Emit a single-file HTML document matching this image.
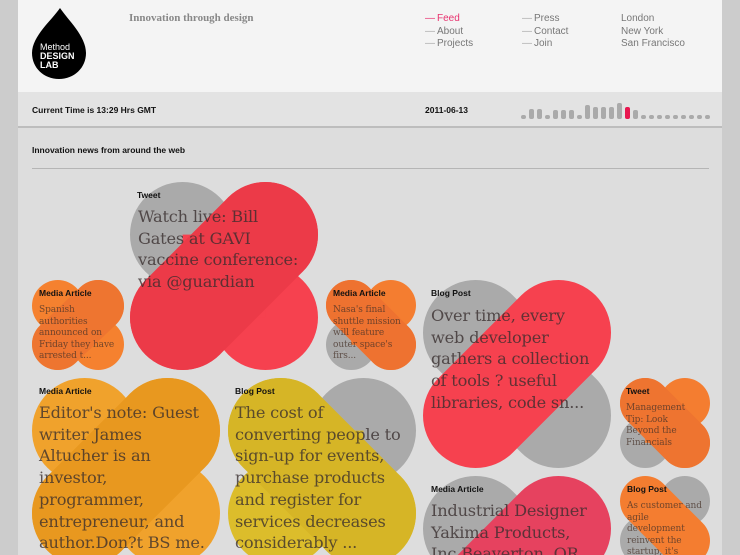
<!DOCTYPE html>
<html style="overflow:hidden;height:555px"><head><meta charset="utf-8"><style>
*{margin:0;padding:0;box-sizing:border-box}
body{width:740px;height:555px;overflow:hidden;background:#cccccc;position:relative;font-family:"Liberation Sans",sans-serif}
.main{position:absolute;left:18px;top:0;width:704px;height:555px;background:#dddddd}
.head{position:absolute;left:18px;top:0;width:704px;height:92px;background:#f4f4f4}
.bar{position:absolute;left:18px;top:92px;width:704px;height:36px;background:#e3e3e3;border-bottom:2px solid #bdbdbd}
.abs{position:absolute;white-space:nowrap}
.nav{font-size:10px;color:#777;line-height:12.5px}
.nav span{color:#aaa;letter-spacing:-1px;margin-right:3px}
.lab{position:absolute;font-size:8.5px;font-weight:bold;color:#111;white-space:nowrap}
.big{position:absolute;font-family:"DejaVu Serif","Liberation Serif",serif;font-size:16.2px;line-height:21.7px;color:rgba(55,45,45,.78);white-space:nowrap;letter-spacing:-.2px}
.sm{position:absolute;font-family:"DejaVu Serif","Liberation Serif",serif;font-size:9px;line-height:11.6px;color:rgba(70,50,40,.75);white-space:nowrap;letter-spacing:-.1px}
</style></head><body>
<div class="main"></div>
<div class="head"></div>
<svg class="abs" style="left:30px;top:6px" width="60" height="76" viewBox="0 0 60 76">
<path d="M30 2 C38 14 56 30 56 47 C56 62 44 73 29 73 C14 73 2 62 2 47 C2 30 22 14 30 2Z" fill="#000"/>
<text x="10" y="44" font-family="Liberation Sans" font-size="9" fill="#fff">Method</text>
<text x="10" y="53" font-family="Liberation Sans" font-size="9" font-weight="bold" fill="#fff">DESIGN</text>
<text x="10" y="62" font-family="Liberation Sans" font-size="9" font-weight="bold" fill="#fff">LAB</text>
</svg>
<div class="abs" style="left:129px;top:12px;font-family:'Liberation Serif',serif;font-weight:bold;font-size:11px;color:#888">Innovation through design</div>
<div class="abs nav" style="left:425px;top:13px"><div style="color:#e8326e"><span style="color:#e8326e">—</span>Feed</div><div><span>—</span>About</div><div><span>—</span>Projects</div></div>
<div class="abs nav" style="left:522px;top:13px"><div><span>—</span>Press</div><div><span>—</span>Contact</div><div><span>—</span>Join</div></div>
<div class="abs nav" style="left:621px;top:13px"><div>London</div><div>New York</div><div>San Francisco</div></div>
<div class="bar"></div>
<div class="abs" style="left:32px;top:105px;font-size:8.5px;font-weight:bold;color:#111">Current Time is 13:29 Hrs GMT</div>
<div class="abs" style="left:425px;top:105px;font-size:8.5px;font-weight:bold;color:#111">2011-06-13</div>
<svg class="abs" style="left:518px;top:98px" width="195" height="24">
<g fill="#aaa">
<rect x="3" y="17" width="5" height="4" rx="2"/><rect x="11" y="11" width="5" height="10" rx="2"/><rect x="19" y="11" width="5" height="10" rx="2"/><rect x="27" y="17" width="5" height="4" rx="2"/><rect x="35" y="12" width="5" height="9" rx="2"/><rect x="43" y="12" width="5" height="9" rx="2"/><rect x="51" y="12" width="5" height="9" rx="2"/><rect x="59" y="17" width="5" height="4" rx="2"/><rect x="67" y="7" width="5" height="14" rx="2"/><rect x="75" y="9" width="5" height="12" rx="2"/><rect x="83" y="9" width="5" height="12" rx="2"/><rect x="91" y="9" width="5" height="12" rx="2"/><rect x="99" y="5" width="5" height="16" rx="2"/><rect x="115" y="12" width="5" height="9" rx="2"/>
<rect x="123" y="17" width="5" height="4" rx="2"/><rect x="131" y="17" width="5" height="4" rx="2"/><rect x="139" y="17" width="5" height="4" rx="2"/><rect x="147" y="17" width="5" height="4" rx="2"/><rect x="155" y="17" width="5" height="4" rx="2"/><rect x="163" y="17" width="5" height="4" rx="2"/><rect x="171" y="17" width="5" height="4" rx="2"/><rect x="179" y="17" width="5" height="4" rx="2"/><rect x="187" y="17" width="5" height="4" rx="2"/>
</g><rect x="107" y="9" width="5" height="12" rx="2" fill="#e8174f"/></svg>
<div class="abs" style="left:32px;top:145px;font-size:8.5px;font-weight:bold;color:#111">Innovation news from around the web</div>
<div class="abs" style="left:32px;top:168px;width:677px;height:1px;background:#b5b5b5"></div>
<svg class="abs" style="left:0;top:0" width="740" height="555" stroke-linecap="round">
<!-- Tweet 130,182,188 r=52.6 ; TL gray -->
<circle cx="182.6" cy="234.6" r="52.6" fill="#aaa"/>
<g fill="#f6414f"><circle cx="265.4" cy="234.6" r="52.6"/><circle cx="265.4" cy="317.4" r="52.6"/><circle cx="182.6" cy="317.4" r="52.6"/><rect x="182.6" y="234.6" width="82.8" height="82.8"/></g>
<line x1="265.4" y1="234.6" x2="182.6" y2="317.4" stroke="#ec3a48" stroke-width="105.2"/>
<!-- Spanish 32,280,92 r=25.8 -->
<g fill="#f5812f"><circle cx="57.8" cy="305.8" r="25.8"/><circle cx="98.2" cy="305.8" r="25.8"/><circle cx="57.8" cy="344.2" r="25.8"/><circle cx="98.2" cy="344.2" r="25.8"/><rect x="57.8" y="305.8" width="40.4" height="38.4"/></g>
<line x1="98.2" y1="305.8" x2="57.8" y2="344.2" stroke="#ee7530" stroke-width="51.6"/>
<!-- Nasa 326,280,90 r=25.2 ; BL gray -->
<circle cx="351.2" cy="344.8" r="25.2" fill="#aaa"/>
<g fill="#f47d30"><circle cx="351.2" cy="305.2" r="25.2"/><circle cx="390.8" cy="305.2" r="25.2"/><circle cx="390.8" cy="344.8" r="25.2"/><rect x="351.2" y="305.2" width="39.6" height="39.6"/></g>
<line x1="351.2" y1="305.2" x2="390.8" y2="344.8" stroke="#ee7230" stroke-width="50.4"/>
<!-- Blog1 423,280,188 -->
<line x1="475.6" y1="332.6" x2="558.4" y2="415.4" stroke="#aaa" stroke-width="105.2"/>
<line x1="558.4" y1="332.6" x2="475.6" y2="415.4" stroke="#f6414f" stroke-width="105.2"/>
<!-- Tweet small 620,378,90 ; BL gray -->
<circle cx="645.2" cy="442.8" r="25.2" fill="#aaa"/>
<g fill="#f47d30"><circle cx="645.2" cy="403.2" r="25.2"/><circle cx="684.8" cy="403.2" r="25.2"/><circle cx="684.8" cy="442.8" r="25.2"/><rect x="645.2" y="403.2" width="39.6" height="39.6"/></g>
<line x1="645.2" y1="403.2" x2="684.8" y2="442.8" stroke="#ee7430" stroke-width="50.4"/>
<!-- Editor 32,378,188 -->
<g fill="#f0a22c"><circle cx="84.6" cy="430.6" r="52.6"/><circle cx="167.4" cy="430.6" r="52.6"/><circle cx="84.6" cy="513.4" r="52.6"/><circle cx="167.4" cy="513.4" r="52.6"/><rect x="84.6" y="430.6" width="82.8" height="82.8"/></g>
<line x1="167.4" y1="430.6" x2="84.6" y2="513.4" stroke="#e8981f" stroke-width="105.2"/>
<!-- Cost 228,378,188 ; TR gray -->
<circle cx="363.4" cy="430.6" r="52.6" fill="#aaa"/>
<g fill="#dcbd2b"><circle cx="280.6" cy="430.6" r="52.6"/><circle cx="280.6" cy="513.4" r="52.6"/><circle cx="363.4" cy="513.4" r="52.6"/><rect x="280.6" y="430.6" width="82.8" height="82.8"/></g>
<line x1="280.6" y1="430.6" x2="363.4" y2="513.4" stroke="#d6b526" stroke-width="105.2"/>
<!-- Industrial 423,476,188 -->
<line x1="475.6" y1="528.6" x2="558.4" y2="611.4" stroke="#aaa" stroke-width="105.2"/>
<line x1="558.4" y1="528.6" x2="475.6" y2="611.4" stroke="#e6425f" stroke-width="105.2"/>
<!-- Blog small 620,476,90 -->
<circle cx="684.8" cy="501.2" r="25.2" fill="#aaa"/>
<circle cx="645.2" cy="540.8" r="25.2" fill="#aaa"/>
<line x1="645.2" y1="501.2" x2="684.8" y2="540.8" stroke="#f47d30" stroke-width="50.4"/>
</svg>
<div class="abs" style="left:722px;top:0;width:18px;height:555px;background:#cccccc"></div>
<div class="lab" style="left:137px;top:190px">Tweet</div>
<div class="big" style="left:138px;top:206px">Watch live: Bill<br>Gates at GAVI<br>vaccine conference:<br>via @guardian</div>
<div class="lab" style="left:39px;top:288px">Media Article</div>
<div class="sm" style="left:39px;top:305px">Spanish<br>authorities<br>announced on<br>Friday they have<br>arrested t...</div>
<div class="lab" style="left:333px;top:288px">Media Article</div>
<div class="sm" style="left:333px;top:305px">Nasa's final<br>shuttle mission<br>will feature<br>outer space's<br>firs...</div>
<div class="lab" style="left:431px;top:288px">Blog Post</div>
<div class="big" style="left:431px;top:305px">Over time, every<br>web developer<br>gathers a collection<br>of tools ? useful<br>libraries, code sn...</div>
<div class="lab" style="left:626px;top:386px">Tweet</div>
<div class="sm" style="left:626px;top:403px">Management<br>Tip: Look<br>Beyond the<br>Financials</div>
<div class="lab" style="left:39px;top:386px">Media Article</div>
<div class="big" style="left:39px;top:402px">Editor's note: Guest<br>writer James<br>Altucher is an<br>investor,<br>programmer,<br>entrepreneur, and<br>author.Don?t BS me.</div>
<div class="lab" style="left:235px;top:386px">Blog Post</div>
<div class="big" style="left:235px;top:402px">The cost of<br>converting people to<br>sign-up for events,<br>purchase products<br>and register for<br>services decreases<br>considerably ...</div>
<div class="lab" style="left:431px;top:484px">Media Article</div>
<div class="big" style="left:431px;top:500px">Industrial Designer<br>Yakima Products,<br>Inc Beaverton, OR</div>
<div class="lab" style="left:627px;top:484px">Blog Post</div>
<div class="sm" style="left:627px;top:501px">As customer and<br>agile<br>development<br>reinvent the<br>startup, it's</div>
</body></html>
